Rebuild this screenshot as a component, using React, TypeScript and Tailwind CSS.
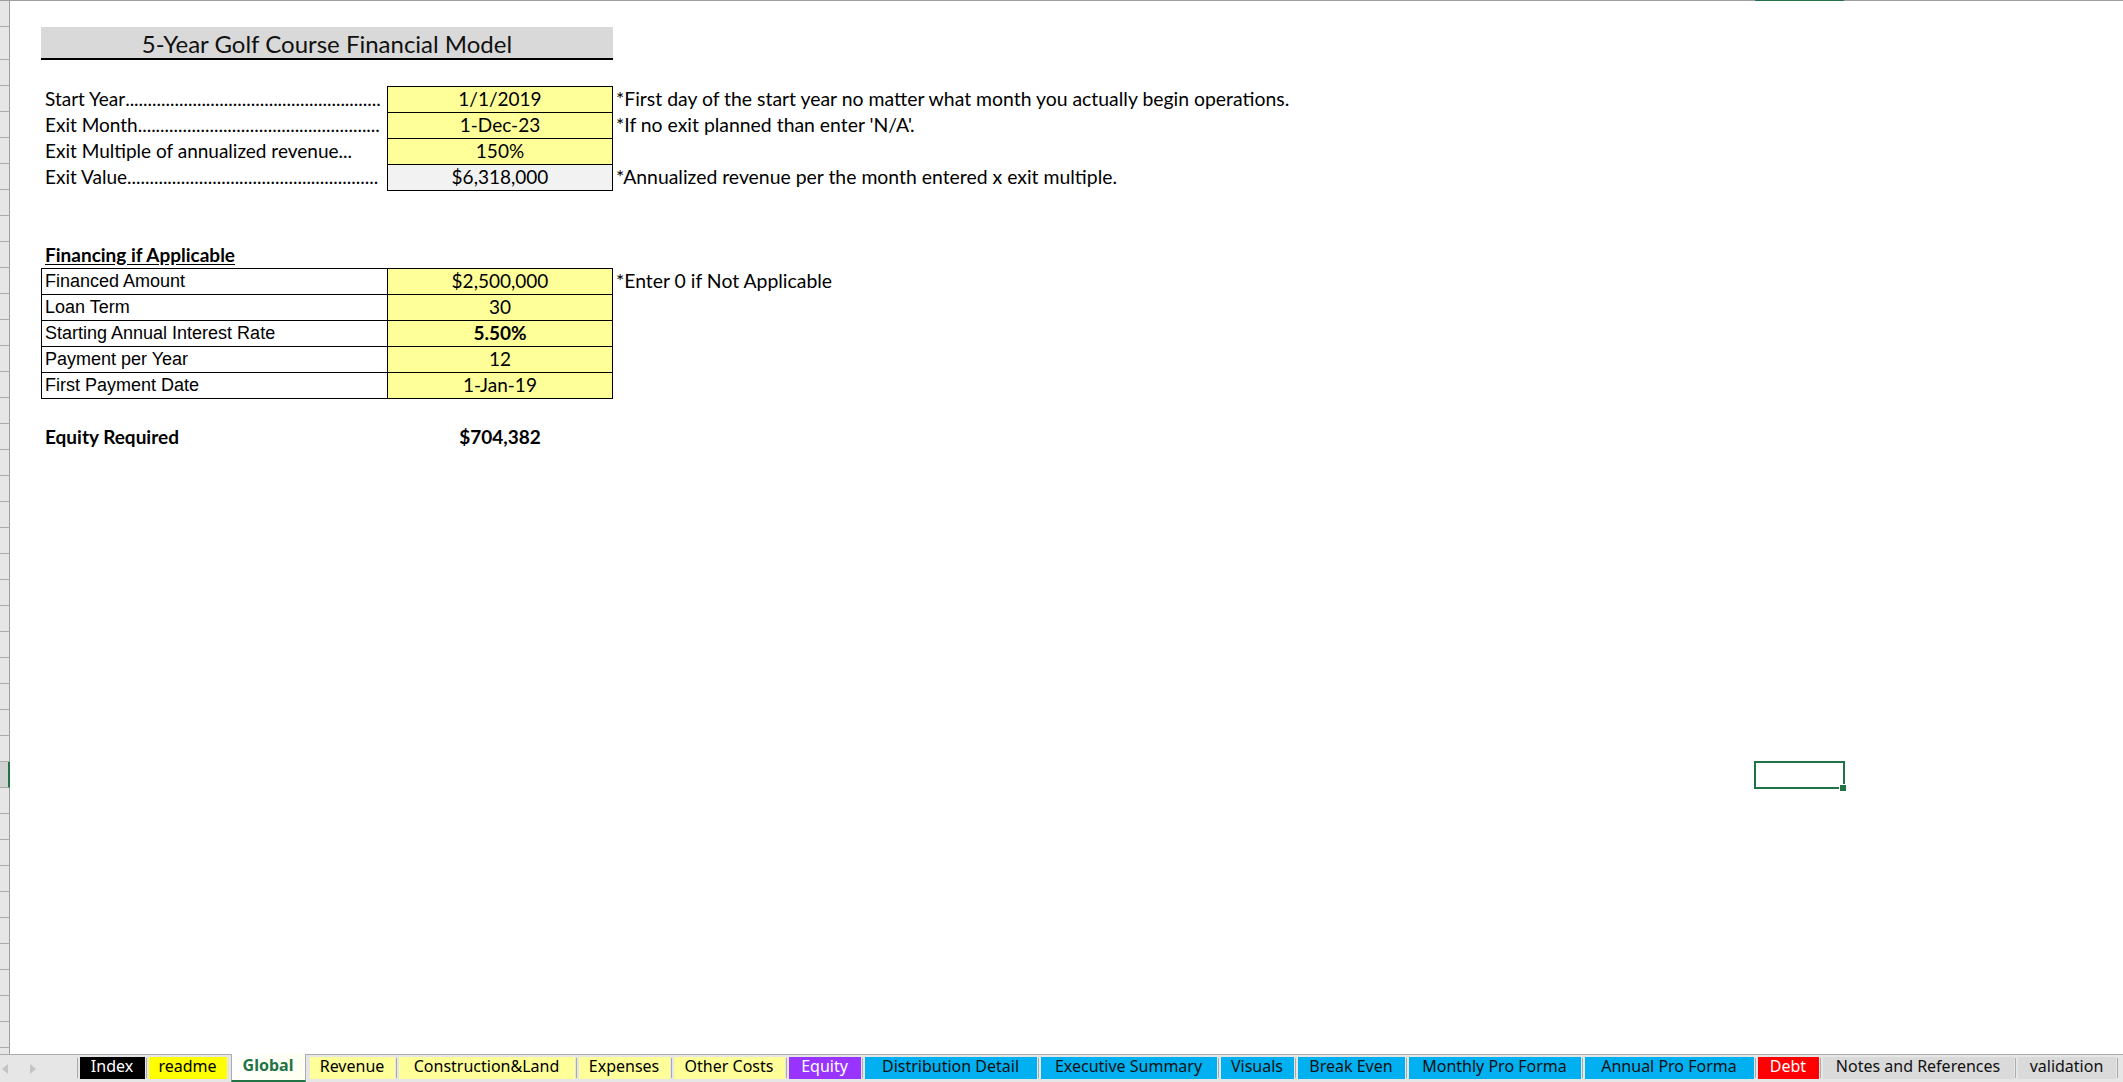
import type { ReactNode } from "react";

type Tab = { name: string; w: string; cls: string; active?: boolean };

const tabs: Tab[] = [
  { name: "Index", w: "w-[65px]", cls: "bg-black text-white" },
  { name: "readme", w: "w-[78px]", cls: "bg-[#ffff00] text-black" },
  { name: "Global", w: "w-[75px]", cls: "", active: true },
  { name: "Revenue", w: "w-[85px]", cls: "bg-[#ffff99] text-black" },
  { name: "Construction&Land", w: "w-[176px]", cls: "bg-[#ffff99] text-black" },
  { name: "Expenses", w: "w-[91px]", cls: "bg-[#ffff99] text-black" },
  { name: "Other Costs", w: "w-[111px]", cls: "bg-[#ffff99] text-black" },
  { name: "Equity", w: "w-[72px]", cls: "bg-[#9933ff] text-white" },
  { name: "Distribution Detail", w: "w-[172px]", cls: "bg-[#00b0f0] text-[#111]" },
  { name: "Executive Summary", w: "w-[176px]", cls: "bg-[#00b0f0] text-[#111]" },
  { name: "Visuals", w: "w-[73px]", cls: "bg-[#00b0f0] text-[#111]" },
  { name: "Break Even", w: "w-[107px]", cls: "bg-[#00b0f0] text-[#111]" },
  { name: "Monthly Pro Forma", w: "w-[172px]", cls: "bg-[#00b0f0] text-[#111]" },
  { name: "Annual Pro Forma", w: "w-[169px]", cls: "bg-[#00b0f0] text-[#111]" },
  { name: "Debt", w: "w-[61px]", cls: "bg-[#ff0000] text-white" },
  { name: "Notes and References", w: "w-[191px]", cls: "bg-[#dadada] text-[#111]" },
  { name: "validation", w: "w-[98px]", cls: "bg-[#dadada] text-[#111]" },
];

const calibri = "font-['Lato','Noto_Sans',sans-serif] text-[19px]";
const arial = "font-['Liberation_Sans',Arial,sans-serif] text-[18px]";

function Strip({ sel }: { sel?: boolean }) {
  return (
    <div
      className={`w-[10px] shrink-0 border-b border-b-[#ababab] ${
        sel ? "border-r-2 border-r-[#217346] bg-[#d2d2d2]" : "border-r border-r-[#9e9e9e] bg-[#e6e6e6]"
      }`}
    />
  );
}

function SheetRow({ h = "h-[26px]", sel, children }: { h?: string; sel?: boolean; children?: ReactNode }) {
  return (
    <div className={`relative flex ${h} shrink-0`}>
      <Strip sel={sel} />
      <div className="w-[31px] shrink-0" />
      {children}
    </div>
  );
}

// label followed by a run of periods up to the cell edge
function Leader({ label, dots }: { label: string; dots: number }) {
  return (
    <div className="flex w-[346px] shrink-0 items-center overflow-hidden pl-[4px] pr-[3px]">
      <span className="whitespace-nowrap">{label}</span>
      <span className="min-w-0 flex-1 overflow-hidden whitespace-nowrap text-clip">{".".repeat(dots)}</span>
    </div>
  );
}

function Value({ children, bg = "bg-[#ffff99]", bold }: { children: ReactNode; bg?: string; bold?: boolean }) {
  return (
    <div
      className={`flex w-[226px] shrink-0 items-center justify-center border-x border-t border-black ${bg} ${
        bold ? "font-bold" : ""
      }`}
    >
      {children}
    </div>
  );
}

function Note({ children }: { children?: ReactNode }) {
  return <div className="flex flex-1 items-center whitespace-nowrap pl-[3px] text-[19.4px]">{children}</div>;
}

function LoanRow({ label, value, bold }: { label: string; value: string; bold?: boolean }) {
  return (
    <SheetRow>
      <div className={`flex w-[346px] shrink-0 items-center border-l border-t border-black pl-[3px] ${arial}`}>
        {label}
      </div>
      <Value bold={bold}>{value}</Value>
    </SheetRow>
  );
}

function TabBar() {
  const items: ReactNode[] = [];
  tabs.forEach((t, i) => {
    const prevActive = i > 0 && tabs[i - 1].active;
    items.push(
      t.active || prevActive ? (
        <div key={`s${i}`} className="w-[4px] shrink-0" />
      ) : (
        <div key={`s${i}`} className="mx-[1.5px] mt-[3px] h-[20px] w-px shrink-0 bg-[#ababab]" />
      )
    );
    items.push(
      t.active ? (
        <div
          key={t.name}
          className={`${t.w} -mt-px flex h-[28px] shrink-0 items-center justify-center border-x border-b-2 border-x-[#ababab] border-b-[#217346] bg-gradient-to-r from-white to-[#fffff0] pb-[5px] font-bold text-[#217346]`}
        >
          {t.name}
        </div>
      ) : (
        <div
          key={t.name}
          className={`${t.w} ${t.cls} mt-[2px] flex h-[22px] shrink-0 items-center justify-center whitespace-nowrap pb-[5px]`}
        >
          {t.name}
        </div>
      )
    );
  });
  items.push(<div key="end" className="mx-[1.5px] mt-[3px] h-[20px] w-px shrink-0 bg-[#ababab]" />);

  return (
    <div className="flex h-[28px] shrink-0 items-start border-t border-[#ababab] bg-[#e6e6e6] font-['Noto_Sans',sans-serif] text-[16px] leading-none">
      <div className="flex h-full w-[75.5px] shrink-0 items-center gap-[22px] pl-[2px]">
        <svg width="6" height="10" viewBox="0 0 6 10">
          <polygon points="6,0 6,10 0,5" fill="#c4c4c4" />
        </svg>
        <svg width="6" height="10" viewBox="0 0 6 10">
          <polygon points="0,0 0,10 6,5" fill="#c4c4c4" />
        </svg>
      </div>
      {items}
    </div>
  );
}

export default function App() {
  const before = Array.from({ length: 12 }, (_, i) => i);
  const after = Array.from({ length: 12 }, (_, i) => i);

  return (
    <div className={`flex h-[1082px] w-[2123px] flex-col overflow-hidden bg-white text-black ${calibri}`}>
      <div className="flex h-[1054px] flex-col overflow-hidden">
        {/* column header edge, selected column marked green */}
        <div className="flex h-px shrink-0">
          <div className="w-[1755px] bg-[#9e9e9e]" />
          <div className="w-[89px] bg-[#217346]" />
          <div className="flex-1 bg-[#9e9e9e]" />
        </div>
        <SheetRow h="h-[26px]" />
        <SheetRow h="h-[33px]">
          <div className="flex w-[572px] shrink-0 items-center justify-center border-b-2 border-black bg-[#d9d9d9] pt-[2px] text-[24px] text-[#111]">
            5-Year Golf Course Financial Model
          </div>
        </SheetRow>
        <SheetRow />

        <SheetRow>
          <Leader label="Start Year" dots={57} />
          <Value>1/1/2019</Value>
          <Note>*First day of the start year no matter what month you actually begin operations.</Note>
        </SheetRow>
        <SheetRow>
          <Leader label="Exit Month" dots={54} />
          <Value>1-Dec-23</Value>
          <Note>*If no exit planned than enter 'N/A'.</Note>
        </SheetRow>
        <SheetRow>
          <div className="flex w-[346px] shrink-0 items-center pl-[4px]">Exit Multiple of annualized revenue...</div>
          <Value>150%</Value>
          <Note />
        </SheetRow>
        <SheetRow>
          <Leader label="Exit Value" dots={56} />
          <Value bg="bg-[#f2f2f2]">$6,318,000</Value>
          <Note>*Annualized revenue per the month entered x exit multiple.</Note>
        </SheetRow>
        <SheetRow>
          <div className="w-[346px] shrink-0" />
          <div className="w-[226px] shrink-0 border-t border-black" />
        </SheetRow>
        <SheetRow />

        <SheetRow>
          <div className="flex w-[346px] shrink-0 items-center pl-[4px] font-bold underline underline-offset-2">
            Financing if Applicable
          </div>
        </SheetRow>
        <SheetRow>
          <div className={`flex w-[346px] shrink-0 items-center border-l border-t border-black pl-[3px] ${arial}`}>
            Financed Amount
          </div>
          <Value>$2,500,000</Value>
          <Note>*Enter 0 if Not Applicable</Note>
        </SheetRow>
        <LoanRow label="Loan Term" value="30" />
        <LoanRow label="Starting Annual Interest Rate" value="5.50%" bold />
        <LoanRow label="Payment per Year" value="12" />
        <LoanRow label="First Payment Date" value="1-Jan-19" />
        <SheetRow>
          <div className="w-[346px] shrink-0 border-t border-black" />
          <div className="w-[226px] shrink-0 border-t border-black" />
        </SheetRow>
        <SheetRow>
          <div className="flex w-[346px] shrink-0 items-center pl-[4px] font-bold">Equity Required</div>
          <div className="flex w-[226px] shrink-0 items-center justify-center font-bold">$704,382</div>
        </SheetRow>

        {before.map((i) => (
          <SheetRow key={`b${i}`} />
        ))}
        <SheetRow sel>
          <div className="absolute left-[1754px] top-[-1px] h-[28px] w-[91px] border-2 border-[#217346]">
            <div className="absolute -bottom-[5px] -right-[4px] h-[8px] w-[8px] border border-white bg-[#217346]" />
          </div>
        </SheetRow>
        {after.map((i) => (
          <SheetRow key={`a${i}`} />
        ))}
      </div>
      <TabBar />
    </div>
  );
}
